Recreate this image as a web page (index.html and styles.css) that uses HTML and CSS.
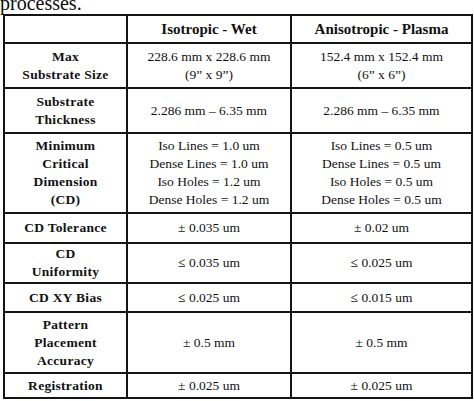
FILE: index.html
```html
<!DOCTYPE html>
<html>
<head>
<meta charset="utf-8">
<link rel="stylesheet" href="styles.css">
</head>
<body>
<p class="caption">processes.</p>
<div class="spec-table">
  <div class="cell"></div>
  <div class="cell head">Isotropic - Wet</div>
  <div class="cell head">Anisotropic - Plasma</div>

  <div class="cell label">Max<br>Substrate Size</div>
  <div class="cell">228.6 mm x 228.6 mm<br>(9” x 9”)</div>
  <div class="cell">152.4 mm x 152.4 mm<br>(6” x 6”)</div>

  <div class="cell label">Substrate<br>Thickness</div>
  <div class="cell">2.286 mm – 6.35 mm</div>
  <div class="cell">2.286 mm – 6.35 mm</div>

  <div class="cell label">Minimum<br>Critical<br>Dimension<br>(CD)</div>
  <div class="cell">Iso Lines = 1.0 um<br>Dense Lines = 1.0 um<br>Iso Holes = 1.2 um<br>Dense Holes = 1.2 um</div>
  <div class="cell">Iso Lines = 0.5 um<br>Dense Lines = 0.5 um<br>Iso Holes = 0.5 um<br>Dense Holes = 0.5 um</div>

  <div class="cell label">CD Tolerance</div>
  <div class="cell">± 0.035 um</div>
  <div class="cell">± 0.02 um</div>

  <div class="cell label">CD<br>Uniformity</div>
  <div class="cell">≤ 0.035 um</div>
  <div class="cell">≤ 0.025 um</div>

  <div class="cell label">CD XY Bias</div>
  <div class="cell">≤ 0.025 um</div>
  <div class="cell">≤ 0.015 um</div>

  <div class="cell label">Pattern<br>Placement<br>Accuracy</div>
  <div class="cell">± 0.5 mm</div>
  <div class="cell">± 0.5 mm</div>

  <div class="cell label">Registration</div>
  <div class="cell">± 0.025 um</div>
  <div class="cell">± 0.025 um</div>
</div>
</body>
</html>
```
FILE: styles.css
```css
html, body {
  margin: 0;
  padding: 0;
  background: #ffffff;
}
body {
  font-family: "Liberation Serif", "Times New Roman", serif;
  color: #111111;
  overflow: hidden;
}
.caption {
  margin: -7px 0 0 0;
  font-size: 20px;
  line-height: 20px;
  color: #0d0d0d;
}
.spec-table {
  margin: 1px 0 0 3px;
  width: 470px;
  box-sizing: border-box;
  display: grid;
  grid-template-columns: 121px 162px 179px;
  grid-template-rows: 26px 43px 43px 78px 28px 38px 27px 59px 23px;
  gap: 2px;
  padding: 2px;
  background: #141414;
}
.cell {
  background: #ffffff;
  display: flex;
  align-items: center;
  justify-content: center;
  text-align: center;
  font-size: 13.5px;
  line-height: 18px;
}
.head {
  font-weight: bold;
  font-size: 15px;
}
.label {
  font-weight: bold;
  font-size: 13.5px;
  letter-spacing: 0.3px;
}
```
